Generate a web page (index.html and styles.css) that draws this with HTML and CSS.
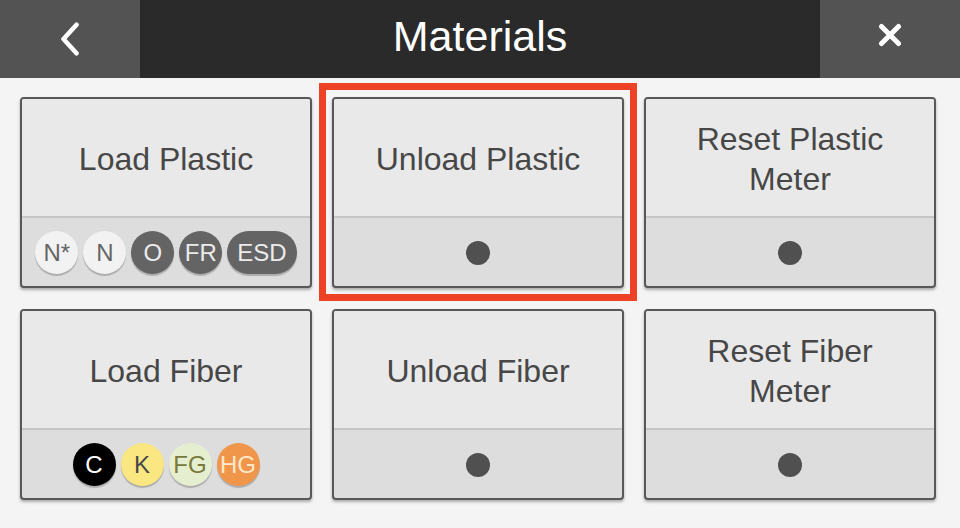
FILE: index.html
```html
<!DOCTYPE html>
<html lang="en">
<head>
<meta charset="utf-8">
<title>Materials</title>
<link rel="stylesheet" href="styles.css">
</head>
<body>
<header class="topbar">
  <div class="nav-btn back">
    <svg width="20" height="34" viewBox="0 0 20 34"><path d="M16.5 2.8 L3.5 17 L16.5 31.2" fill="none" stroke="#fff" stroke-width="4.6" stroke-linecap="round" stroke-linejoin="round"/></svg>
  </div>
  <div class="title">Materials</div>
  <div class="nav-btn close">
    <svg width="24" height="24" viewBox="0 0 24 24"><path d="M3.5 3.5 L20.5 20.5 M20.5 3.5 L3.5 20.5" fill="none" stroke="#fff" stroke-width="5" stroke-linecap="round"/></svg>
  </div>
</header>
<main class="grid">
  <div class="card">
    <div class="card-top">Load Plastic</div>
    <div class="card-bottom">
      <span class="badge light">N*</span>
      <span class="badge light">N</span>
      <span class="badge dark">O</span>
      <span class="badge dark">FR</span>
      <span class="badge dark pill">ESD</span>
    </div>
  </div>
  <div class="card selected">
    <div class="card-top">Unload Plastic</div>
    <div class="card-bottom"><span class="dot"></span></div>
  </div>
  <div class="card">
    <div class="card-top">Reset Plastic<br>Meter</div>
    <div class="card-bottom"><span class="dot"></span></div>
  </div>
  <div class="card">
    <div class="card-top">Load Fiber</div>
    <div class="card-bottom">
      <span class="badge carbon">C</span>
      <span class="badge kevlar">K</span>
      <span class="badge fg">FG</span>
      <span class="badge hg">HG</span>
    </div>
  </div>
  <div class="card">
    <div class="card-top">Unload Fiber</div>
    <div class="card-bottom"><span class="dot"></span></div>
  </div>
  <div class="card">
    <div class="card-top">Reset Fiber<br>Meter</div>
    <div class="card-bottom"><span class="dot"></span></div>
  </div>
</main>
</body>
</html>
```
FILE: styles.css
```css
* { box-sizing: border-box; }

html, body {
  margin: 0;
  padding: 0;
  width: 960px;
  height: 528px;
  overflow: hidden;
  background: #f4f4f4;
  font-family: "Liberation Sans", Arial, sans-serif;
}

.topbar {
  display: flex;
  height: 78px;
  background: #2a2a2a;
}

.nav-btn {
  width: 140px;
  height: 78px;
  background: #535353;
  display: flex;
  align-items: center;
  justify-content: center;
}

.nav-btn svg { display: block; }

.close svg { margin-bottom: 9px; }

.title {
  flex: 1;
  text-align: center;
  color: #fff;
  font-size: 43px;
  line-height: 72px;
}

.grid {
  display: grid;
  grid-template-columns: repeat(3, 292px);
  grid-auto-rows: 191px;
  column-gap: 20px;
  row-gap: 21px;
  padding: 19px 0 0 20px;
}

.card {
  position: relative;
  display: flex;
  flex-direction: column;
  border: 2px solid #585858;
  border-radius: 4px;
  box-shadow: 0 2px 3px rgba(0, 0, 0, 0.3);
  background: #dddddd;
}

.card.selected::after {
  content: "";
  position: absolute;
  left: -15px;
  right: -15px;
  top: -16px;
  bottom: -15px;
  border: 7px solid #ee4226;
  pointer-events: none;
}

.card-top {
  flex: 0 0 119px;
  background: #e9e9e9;
  border-bottom: 2px solid #c6c6c6;
  border-radius: 2px 2px 0 0;
  display: flex;
  align-items: center;
  justify-content: center;
  text-align: center;
  color: #474747;
  font-size: 32px;
  line-height: 40px;
  padding-top: 3px;
}

.card-bottom {
  flex: 1;
  display: flex;
  align-items: center;
  justify-content: center;
  gap: 5px;
  padding-top: 1px;
}

.dot {
  width: 24px;
  height: 24px;
  border-radius: 50%;
  background: #505050;
}

.badge {
  min-width: 43px;
  height: 43px;
  border-radius: 22px;
  display: flex;
  align-items: center;
  justify-content: center;
  font-size: 24px;
  box-shadow: 0 2px 1px rgba(0, 0, 0, 0.22);
}

.badge.pill { padding: 0 10px; }

.badge.light { background: #f2f2f2; color: #666; }
.badge.dark { background: #646464; color: #ebebeb; }
.badge.carbon { background: #000; color: #fff; }
.badge.kevlar { background: #fae782; color: #484848; }
.badge.fg { background: #e5efcf; color: #777a3c; }
.badge.hg { background: #f0964a; color: #ffe8cc; }
```
